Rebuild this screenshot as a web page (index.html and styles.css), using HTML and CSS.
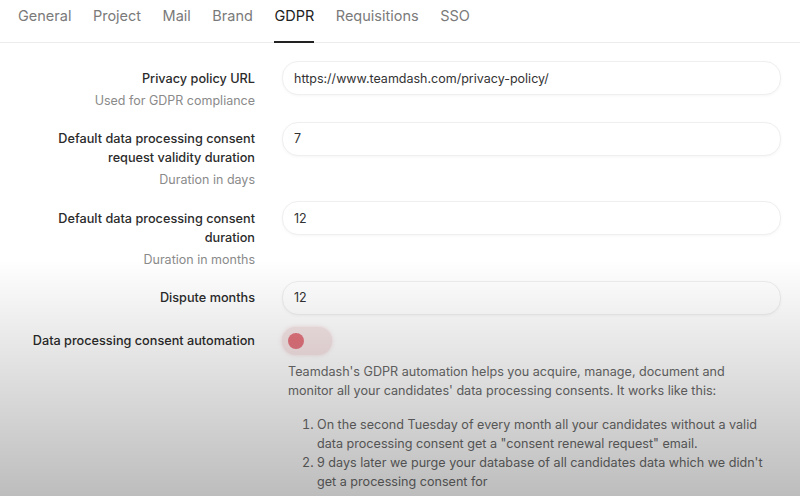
FILE: index.html
```html
<!DOCTYPE html>
<html lang="en">
<head>
    <meta charset="UTF-8">
    <title>Settings - GDPR</title>
    <link rel="stylesheet" href="styles.css">
</head>
<body>
    <nav class="tabs">
        <a class="tab">General</a>
        <a class="tab">Project</a>
        <a class="tab">Mail</a>
        <a class="tab">Brand</a>
        <a class="tab active">GDPR</a>
        <a class="tab">Requisitions</a>
        <a class="tab">SSO</a>
    </nav>

    <form class="settings">
        <div class="label">
            <div class="label-title">Privacy policy URL</div>
            <div class="label-hint">Used for GDPR compliance</div>
        </div>
        <div class="field"><input class="input" type="text" value="https://www.teamdash.com/privacy-policy/"></div>

        <div class="label">
            <div class="label-title">Default data processing consent request validity duration</div>
            <div class="label-hint">Duration in days</div>
        </div>
        <div class="field"><input class="input" type="text" value="7"></div>

        <div class="label">
            <div class="label-title">Default data processing consent duration</div>
            <div class="label-hint">Duration in months</div>
        </div>
        <div class="field"><input class="input" type="text" value="12"></div>

        <div class="label">
            <div class="label-title">Dispute months</div>
        </div>
        <div class="field"><input class="input" type="text" value="12"></div>

        <div class="label label-toggle">
            <div class="label-title">Data processing consent automation</div>
        </div>
        <div class="field">
            <span class="toggle"><span class="knob"></span></span>
            <div class="description">
                <p>Teamdash's GDPR automation helps you acquire, manage, document and monitor all your candidates' data processing consents. It works like this:</p>
                <ol>
                    <li>On the second Tuesday of every month all your candidates without a valid data processing consent get a "consent renewal request" email.</li>
                    <li>9 days later we purge your database of all candidates data which we didn't get a processing consent for</li>
                </ol>
            </div>
        </div>
    </form>
</body>
</html>
```

FILE: styles.css
```css
body {
    margin: 0;
    background: #fff;
    font-family: Inter, "Noto Sans", sans-serif;
    color: #2b2b2b;
    overflow: hidden;
}

/* video fade over the lower part of the page */
body::after {
    content: "";
    position: fixed;
    left: 0;
    right: 0;
    top: 260px;
    bottom: 0;
    background: linear-gradient(to bottom, rgba(0, 0, 0, 0), rgba(0, 0, 0, 0.26));
    pointer-events: none;
}

.tabs {
    display: flex;
    gap: 21.5px;
    padding-left: 18px;
    height: 42px;
    border-bottom: 1px solid #ececec;
}

.tab {
    font-size: 14.5px;
    color: #7a7a7a;
    line-height: 32px;
    border-bottom: 2px solid transparent;
    margin-bottom: -1px;
}

.tab.active {
    color: #222;
    border-bottom-color: #222;
}

.settings {
    display: grid;
    grid-template-columns: 255px 499px;
    column-gap: 27px;
    row-gap: 12px;
    padding-top: 18px;
}

.label {
    text-align: right;
    padding-top: 7.5px;
    font-size: 12.5px;
    line-height: 19px;
}

.label-title {
    font-size: 12.7px;
    font-weight: 500;
    color: #2b2b2b;
    max-width: 200px;
    margin-left: auto;
}

.label-hint {
    color: #8a8a8a;
    margin-top: 3px;
}

.label-toggle {
    padding-top: 4.5px;
}

.label-toggle .label-title {
    max-width: none;
    white-space: nowrap;
}

.input {
    box-sizing: border-box;
    width: 100%;
    height: 34px;
    border: 1px solid #efefef;
    border-radius: 16px;
    padding: 0 11px;
    font-family: inherit;
    font-size: 12.5px;
    color: #333;
    background: #fff;
    box-shadow: 0 1px 3px rgba(0, 0, 0, 0.04);
    outline: none;
}

.toggle {
    display: block;
    position: relative;
    width: 50px;
    height: 28px;
    border-radius: 14px;
    background: #f5e4e6;
    box-shadow: 0 0 4px rgba(220, 150, 160, 0.35);
}

.knob {
    position: absolute;
    left: 6px;
    top: 6px;
    width: 16px;
    height: 16px;
    border-radius: 50%;
    background: #e3747e;
}

.description {
    padding-left: 6px;
    margin-top: 7px;
    font-size: 12.6px;
    line-height: 19px;
    color: #6a6a6a;
}

.description p {
    margin: 0;
    padding-right: 40px;
}

.description ol {
    margin: 15px 0 0;
    padding-left: 29px;
}
```
